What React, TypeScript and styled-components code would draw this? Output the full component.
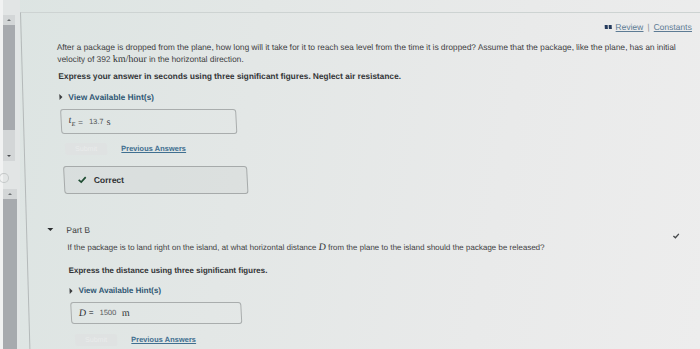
import styled, { createGlobalStyle } from "styled-components";

const GlobalStyle = createGlobalStyle`
  html, body {
    margin: 0;
    padding: 0;
  }
  body {
    font-family: "Liberation Sans", Arial, sans-serif;
    background: #e6e8e7;
  }
`;

const Screen = styled.div`
  width: 700px;
  height: 349px;
  overflow: hidden;
  display: flex;
  background: linear-gradient(100deg, #dce4e2 0%, #e3e7e6 35%, #e9eaea 70%, #ededed 100%);
`;

const Gutter = styled.div`
  width: 20px;
  flex-shrink: 0;
  display: flex;
  flex-direction: column;
  padding-top: 15px;
  box-sizing: border-box;
  background: #e2e5e5;
  border-left: 3px solid #f1f2f2;
`;

const ScrollTrack = styled.div<{ $h: number; $w: number }>`
  width: ${(p) => p.$w}px;
  height: ${(p) => p.$h}px;
  display: flex;
  flex-direction: column;
  align-items: center;
  background: #d3d6d7;
`;

const Arrow = styled.div<{ $dir: "up" | "down" }>`
  height: 10px;
  width: 100%;
  display: flex;
  align-items: center;
  justify-content: center;
  &::after {
    content: "";
    border-left: 2px solid transparent;
    border-right: 2px solid transparent;
    ${(p) =>
      p.$dir === "up"
        ? "border-bottom: 2px solid #6d7073;"
        : "border-top: 2px solid #4a4d50;"}
  }
`;

const Thumb = styled.div<{ $h: number }>`
  width: 100%;
  height: ${(p) => p.$h}px;
  background: #a7aaae;
`;

const Spacer = styled.div`
  flex: 1;
`;

const Knob = styled.div`
  width: 8px;
  height: 9px;
  margin: 12px 0 6px -4px;
  border: 1px solid #c4c8c8;
  border-radius: 50%;
`;

const Panel = styled.div`
  flex: 1;
  margin-top: 12px;
  border-top: 1px solid #cdd3d2;
  border-left: 1px solid #b4b9b9;
  transform: skewX(1.6deg);
  transform-origin: 0 0;
`;

const Content = styled.div`
  transform: skewX(1.4deg);
  transform-origin: 0 0;
  padding-left: 34px;
  color: #3f4143;
  line-height: 12px;
`;

const Section = styled.section<{ $size: number }>`
  font-size: ${(p) => p.$size}px;
`;

const Header = styled.div`
  height: 28px;
  display: flex;
  justify-content: flex-end;
  align-items: center;
  padding: 9px 9px 9px 0;
  box-sizing: border-box;
  font-size: 8.5px;
  line-height: 10px;
  color: #6b7a86;
`;

const BookIcon = styled.span`
  display: inline-flex;
  gap: 1px;
  margin-right: 4px;
  &::before,
  &::after {
    content: "";
    width: 3px;
    height: 4px;
    background: #243a5c;
  }
`;

const HeaderLink = styled.span`
  text-decoration: underline;
  color: #5d7b94;
`;

const Sep = styled.span`
  margin: 0 4px;
  color: #8a9196;
`;

const Paragraph = styled.p<{ $mt?: number }>`
  margin: ${(p) => p.$mt ?? 0}px 0 0;
  white-space: nowrap;
`;

const Strong = styled.p<{ $mt: number }>`
  margin: ${(p) => p.$mt}px 0 0;
  font-weight: bold;
  color: #333537;
  white-space: nowrap;
`;

const MathText = styled.span<{ $italic?: boolean }>`
  font-family: "Liberation Serif", "Times New Roman", serif;
  font-style: ${(p) => (p.$italic ? "italic" : "normal")};
  font-size: 10px;
  color: #2f3133;
`;

const Sub = styled.sub`
  font-size: 6px;
`;

const HintRow = styled.div<{ $mt: number }>`
  margin-top: ${(p) => p.$mt}px;
  display: flex;
  align-items: center;
  gap: 6px;
  font-weight: bold;
  color: #2f5673;
  &::before {
    content: "";
    border-top: 3px solid transparent;
    border-bottom: 3px solid transparent;
    border-left: 3px solid #3a3c3e;
  }
`;

const AnswerBox = styled.div<{ $mt: number; $h: number; $w: number }>`
  margin-top: ${(p) => p.$mt}px;
  width: ${(p) => p.$w}px;
  height: ${(p) => p.$h}px;
  box-sizing: border-box;
  border: 1px solid #a9adad;
  border-radius: 3px;
  display: flex;
  align-items: center;
  padding-left: 7px;
  gap: 3px;
  color: #55585a;
`;

const Number = styled.span`
  margin-left: 3px;
  font-size: 7.5px;
`;

const SubmitRow = styled.div<{ $mt: number }>`
  margin-top: ${(p) => p.$mt}px;
  display: flex;
  align-items: center;
  gap: 14px;
  padding-left: 3px;
`;

const SubmitButton = styled.div`
  width: 42px;
  height: 12px;
  border-radius: 2px;
  background: #dfe2e2;
  color: #eaecec;
  font-size: 7px;
  line-height: 12px;
  text-align: center;
`;

const PrevLink = styled.span`
  font-weight: bold;
  color: #3f6f90;
  text-decoration: underline;
  font-size: 7.5px;
`;

const Feedback = styled.div`
  margin-top: 11px;
  width: 184px;
  height: 28px;
  box-sizing: border-box;
  border: 1px solid #a6aaaa;
  border-radius: 3px;
  background: rgba(200, 205, 205, 0.25);
  display: flex;
  align-items: center;
  padding-left: 13px;
  gap: 7px;
  font-weight: bold;
  color: #303335;
  font-size: 8.5px;
`;

const PartHeader = styled.div`
  margin-top: 27px;
  display: flex;
  align-items: center;
  margin-left: -19px;
  padding-right: 32px;
  font-size: 8.5px;
  color: #3a3c3e;
`;

const Caret = styled.span`
  width: 0;
  height: 0;
  border-left: 3px solid transparent;
  border-right: 3px solid transparent;
  border-top: 3px solid #2b2d2f;
  margin-right: 13px;
`;

const CornerCheck = styled.span`
  margin-left: auto;
  margin-top: 12px;
  display: flex;
`;

const Check = ({ size, color }: { size: number; color: string }) => (
  <svg width={size} height={size * 0.8} viewBox="0 0 10 8">
    <path d="M1 4.2 L3.7 6.8 L9 1.2" fill="none" stroke={color} strokeWidth="1.9" />
  </svg>
);

export default function App() {
  return (
    <>
      <GlobalStyle />
      <Screen>
        <Gutter>
          <ScrollTrack $h={155} $w={12}>
            <Arrow $dir="up" />
            <Thumb $h={105} />
            <Spacer />
            <Arrow $dir="down" />
          </ScrollTrack>
          <Knob />
          <ScrollTrack $h={160} $w={14}>
            <Arrow $dir="up" />
            <Thumb $h={150} />
          </ScrollTrack>
        </Gutter>
        <Panel>
          <Content>
            <Header>
              <BookIcon />
              <HeaderLink>Review</HeaderLink>
              <Sep>|</Sep>
              <HeaderLink>Constants</HeaderLink>
            </Header>

            <Section $size={8.3}>
              <Paragraph>
                After a package is dropped from the plane, how long will it take for it to reach sea level from the time it is dropped? Assume that the package, like the plane, has an initial
                <br />
                velocity of 392 <MathText>km/hour</MathText> in the horizontal direction.
              </Paragraph>
              <Strong $mt={5}>
                Express your answer in seconds using three significant figures. Neglect air resistance.
              </Strong>
              <HintRow $mt={9}>View Available Hint(s)</HintRow>
              <AnswerBox $mt={6} $h={25} $w={176}>
                <MathText $italic>
                  t<Sub>E</Sub>
                </MathText>
                =<Number>13.7</Number>
                <MathText>s</MathText>
              </AnswerBox>
              <SubmitRow $mt={9}>
                <SubmitButton>Submit</SubmitButton>
                <PrevLink>Previous Answers</PrevLink>
              </SubmitRow>
              <Feedback>
                <Check size={9} color="#1f4d33" />
                Correct
              </Feedback>
            </Section>

            <Section $size={8}>
              <PartHeader>
                <Caret />
                Part B
                <CornerCheck>
                  <Check size={7} color="#45484a" />
                </CornerCheck>
              </PartHeader>
              <Paragraph $mt={2}>
                If the package is to land right on the island, at what horizontal distance <MathText $italic>D</MathText> from the plane to the island should the package be released?
              </Paragraph>
              <Strong $mt={11}>Express the distance using three significant figures.</Strong>
              <HintRow $mt={8}>View Available Hint(s)</HintRow>
              <AnswerBox $mt={5} $h={22} $w={171}>
                <MathText $italic>D</MathText>=<Number>1500</Number>
                <MathText>&nbsp;m</MathText>
              </AnswerBox>
              <SubmitRow $mt={10}>
                <SubmitButton>Submit</SubmitButton>
                <PrevLink>Previous Answers</PrevLink>
              </SubmitRow>
            </Section>
          </Content>
        </Panel>
      </Screen>
    </>
  );
}
